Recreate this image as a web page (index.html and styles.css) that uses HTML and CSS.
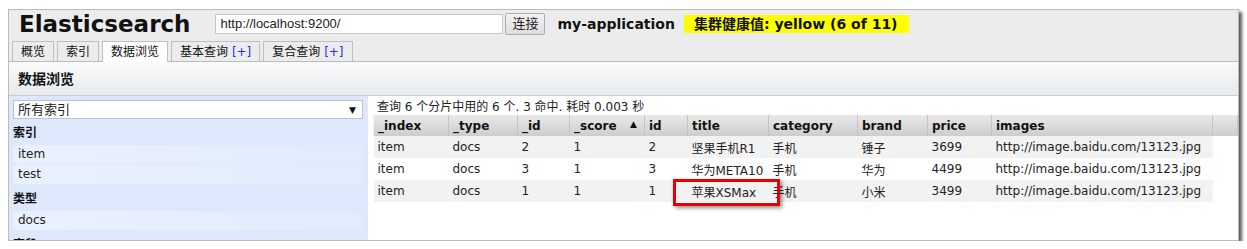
FILE: index.html
```html
<!DOCTYPE html>
<html lang="zh">
<head>
  <meta charset="UTF-8" />
  <title>Elasticsearch Head</title>
  <link rel="stylesheet" href="styles.css">
</head>
<body>

  <div class="frame">
    <div class="header">
      <div class="topbar">
        <h1>Elasticsearch</h1>
        <div class="url">http://localhost:9200/</div>
        <div class="connect">连接</div>
        <div class="cluster">my-application</div>
        <div class="health">集群健康值: yellow (6 of 11)</div>
      </div>
      <div class="tabs">
        <div class="tab">概览</div>
        <div class="tab">索引</div>
        <div class="tab active">数据浏览</div>
        <div class="tab">基本查询 <span class="plus">[+]</span></div>
        <div class="tab">复合查询 <span class="plus">[+]</span></div>
      </div>
    </div>

    <div class="subhead">数据浏览</div>

    <div class="main">
      <div class="side">
        <div class="select">所有索引<span class="arrow">▼</span></div>
        <div class="side-title">索引</div>
        <div class="side-item">item</div>
        <div class="side-item">test</div>
        <div class="side-title">类型</div>
        <div class="side-item">docs</div>
        <div class="side-title">字段</div>
      </div>

      <div class="results">
        <div class="summary">查询 6 个分片中用的 6 个. 3 命中. 耗时 0.003 秒</div>
        <table>
          <colgroup>
            <col style="width:75px"><col style="width:69px"><col style="width:52px">
            <col style="width:75px"><col style="width:43px"><col style="width:81px">
            <col style="width:89px"><col style="width:70px"><col style="width:64px">
            <col style="width:221px"><col>
          </colgroup>
          <thead>
            <tr>
              <th>_index</th><th>_type</th><th>_id</th>
              <th>_score <span class="sort">▲</span></th>
              <th>id</th><th>title</th><th>category</th><th>brand</th><th>price</th><th>images</th><th class="filler"></th>
            </tr>
          </thead>
          <tbody>
            <tr>
              <td>item</td><td>docs</td><td>2</td><td>1</td><td>2</td><td>坚果手机R1</td><td>手机</td><td>锤子</td><td>3699</td><td>http://image.baidu.com/13123.jpg</td><td class="filler"></td>
            </tr>
            <tr>
              <td>item</td><td>docs</td><td>3</td><td>1</td><td>3</td><td>华为META10</td><td>手机</td><td>华为</td><td>4499</td><td>http://image.baidu.com/13123.jpg</td><td class="filler"></td>
            </tr>
            <tr>
              <td>item</td><td>docs</td><td>1</td><td>1</td><td>1</td><td>苹果XSMax</td><td>手机</td><td>小米</td><td>3499</td><td>http://image.baidu.com/13123.jpg</td><td class="filler"></td>
            </tr>
          </tbody>
        </table>
      </div>
    </div>

    <div class="mark"></div>
  </div>

</body>
</html>
```

FILE: styles.css
```css
body {
  margin: 9px 0 0 8px;
  background: #fff;
  font-family: 'DejaVu Sans', 'Noto Sans CJK SC', sans-serif;
  font-size: 12px;
  color: #222;
}

.frame {
  position: relative;
  width: 1231px;
  height: 232px;
  box-sizing: border-box;
  border: 1px solid #bbb;
  overflow: hidden;
  box-shadow: 3px 3px 3px rgba(0,0,0,0.65);
  display: flex;
  flex-direction: column;
}

/* header */
.header {
  background: #ececec;
  border-bottom: 1px solid #bbb;
  height: 51px;
  flex-shrink: 0;
  display: flex;
  flex-direction: column;
  justify-content: space-between;
}

.topbar {
  display: flex;
  align-items: center;
  height: 22px;
  margin-top: 3px;
  padding-left: 10px;
}

.topbar h1 {
  margin: 0 25px 0 0;
  font-family: 'DejaVu Sans', sans-serif;
  font-size: 23px;
  font-weight: bold;
  color: #111;
  line-height: 22px;
}

.url {
  width: 288px;
  height: 20px;
  box-sizing: border-box;
  border: 1px solid #c8c8c8;
  background: #fff;
  font-family: 'Liberation Sans', sans-serif;
  font-size: 13px;
  line-height: 18px;
  padding-left: 4px;
}

.connect {
  margin-left: 2px;
  width: 40px;
  height: 22px;
  box-sizing: border-box;
  border: 1px solid #adadad;
  border-radius: 2px;
  background: linear-gradient(#f2f2f2, #dedede);
  font-size: 13px;
  line-height: 20px;
  text-align: center;
}

.cluster {
  margin-left: 12px;
  font-size: 14px;
  font-weight: bold;
  color: #111;
}

.health {
  margin-left: 9px;
  background: #ffff00;
  font-size: 14px;
  font-weight: bold;
  color: #111;
  height: 18px;
  line-height: 18px;
  padding: 0 11px 0 10px;
}

.tabs {
  display: flex;
  gap: 3px;
  padding-left: 3px;
  margin-bottom: -1px;
}

.tab {
  height: 20px;
  box-sizing: border-box;
  border: 1px solid #c0c0c0;
  border-bottom: none;
  background: #ececec;
  padding: 0 8px;
  line-height: 21px;
  font-size: 12px;
  color: #111;
}

.tab.active {
  background: #fff;
  height: 21px;
}

.plus {
  color: #2b2bff;
}

/* sub header */
.subhead {
  height: 34px;
  flex-shrink: 0;
  box-sizing: border-box;
  border-bottom: 1px solid #ccc;
  background: linear-gradient(#fafbfb, #e6eaed);
  padding-left: 9px;
  line-height: 34px;
  font-size: 14px;
  font-weight: bold;
  color: #111;
}

/* body */
.main {
  flex: 1;
  display: flex;
}

.side {
  width: 359px;
  background: #dde8fc;
  padding: 4px 5px 0 4px;
  box-sizing: border-box;
}

.select {
  height: 19px;
  box-sizing: border-box;
  border: 1px solid #b9c4d4;
  background: #fff;
  font-size: 13px;
  line-height: 18px;
  padding-left: 4px;
  position: relative;
}

.select .arrow {
  position: absolute;
  right: 6px;
  top: 0;
  font-size: 9px;
  color: #111;
}

.side-title {
  font-size: 12px;
  font-weight: bold;
  color: #111;
  height: 26px;
  line-height: 28px;
}

.side-item {
  height: 19px;
  margin-bottom: 1px;
  border-radius: 4px;
  background: linear-gradient(to right, #e9f1fe, #e2ebfc);
  padding-left: 5px;
  line-height: 19px;
  font-size: 12px;
}

.results {
  flex: 1;
  background: #fff;
  padding-left: 5px;
}

.summary {
  height: 19px;
  line-height: 23px;
  padding-left: 4px;
  font-size: 12px;
}

table {
  width: 100%;
  border-collapse: collapse;
  table-layout: fixed;
}

th {
  height: 21px;
  padding: 0 0 0 4px;
  text-align: left;
  font-size: 12px;
  font-weight: bold;
  color: #111;
  background: linear-gradient(#e9e9e9, #cdcdcd);
  border-left: 1px solid #f3f3f3;
  border-right: 1px solid #c4c4c4;
  white-space: nowrap;
}

th .sort {
  float: right;
  font-size: 9px;
  margin-right: 7px;
}

td {
  height: 22px;
  padding: 0 0 0 4px;
  font-size: 12px;
  white-space: nowrap;
  overflow: hidden;
}

tbody tr:nth-child(odd) td {
  background: #f2f2f2;
}

tbody td.filler {
  background: #fff !important;
}

/* red annotation box */
.mark {
  position: absolute;
  left: 664px;
  top: 169px;
  width: 107px;
  height: 27px;
  box-sizing: border-box;
  border: 3px solid #e60000;
  box-shadow: 2px 2px 4px rgba(0,0,0,0.45);
}
```
